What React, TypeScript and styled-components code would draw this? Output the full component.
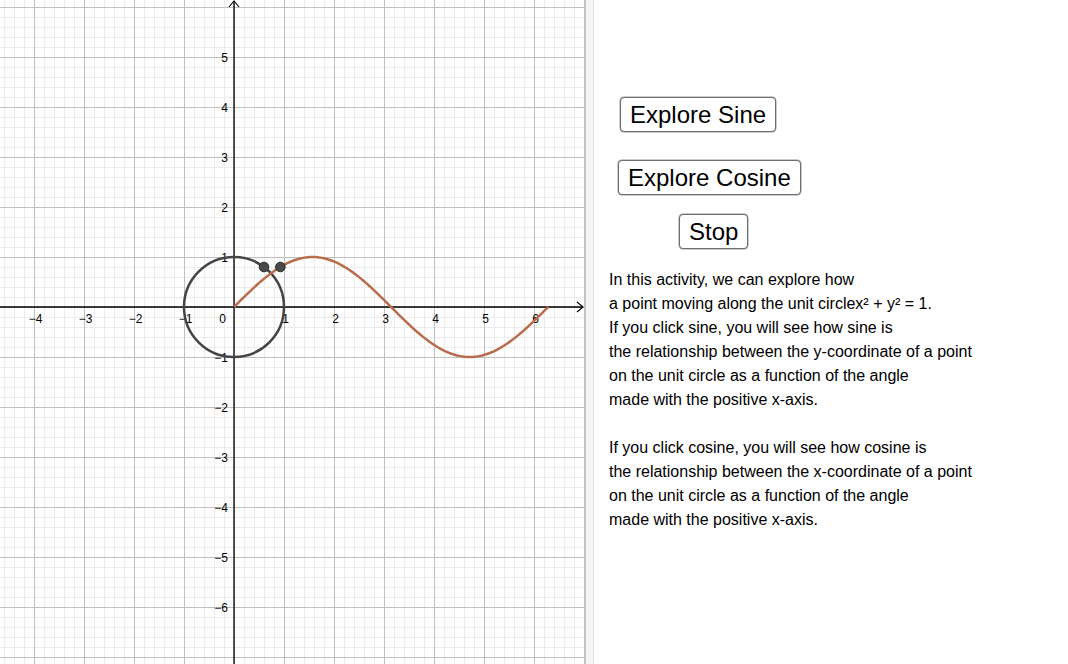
import React from "react";
import styled, { createGlobalStyle } from "styled-components";

const GlobalStyle = createGlobalStyle`
  html, body {
    margin: 0;
    padding: 0;
    background: #ffffff;
    font-family: "Liberation Sans", Arial, sans-serif;
  }
`;

const Page = styled.div`
  display: flex;
  flex-direction: row;
  width: 1068px;
  height: 664px;
  overflow: hidden;
  background: #ffffff;
`;

const GraphicsView = styled.div`
  flex: 0 0 585px;
  height: 664px;
  overflow: hidden;
  background: #ffffff;
`;

const Divider = styled.div`
  flex: 0 0 7px;
  height: 664px;
  background: #f4f4f4;
  border-left: 1px solid #c8c8c8;
  border-right: 1px solid #e2e2e2;
`;

const SidePanel = styled.div`
  flex: 1;
  display: flex;
  flex-direction: column;
  align-items: flex-start;
  padding-top: 97px;
`;

const ActionButton = styled.button<{ $left: number; $gap: number }>`
  margin-left: ${(p) => p.$left}px;
  margin-top: ${(p) => p.$gap}px;
  height: 35px;
  padding: 0 9px;
  font-family: "Liberation Sans", Arial, sans-serif;
  font-size: 24px;
  color: #000000;
  background: #ffffff;
  border: 1px solid #6e6e6e;
  box-shadow: 0 0 0 0.5px #9a9a9a;
  border-radius: 4px;
  cursor: pointer;
  line-height: 33px;
`;

const Description = styled.div`
  margin-top: 19px;
  margin-left: 15px;
  font-family: "Liberation Sans", Arial, sans-serif;
  font-size: 16px;
  line-height: 24px;
  color: #000000;
`;

const Line = styled.div`
  white-space: nowrap;
  min-height: 24px;
`;

const W = 585;
const H = 664;
const OX = 234;
const OY = 307;
const U = 50;

function Graph() {
  const minorV: number[] = [];
  const majorV: number[] = [];
  for (let x = OX % 10; x <= W; x += 10) {
    if ((x - OX) % U === 0) majorV.push(x);
    else minorV.push(x);
  }
  const minorH: number[] = [];
  const majorH: number[] = [];
  for (let y = OY % 10; y <= H; y += 10) {
    if ((y - OY) % U === 0) majorH.push(y);
    else minorH.push(y);
  }

  let d = "";
  const steps = 200;
  for (let i = 0; i <= steps; i++) {
    const t = (i / steps) * 2 * Math.PI;
    const px = OX + t * U;
    const py = OY - Math.sin(t) * U;
    d += `${i === 0 ? "M" : "L"}${px.toFixed(2)},${py.toFixed(2)}`;
  }

  const xLabels = [-4, -3, -2, -1, 1, 2, 3, 4, 5, 6];
  const yLabels = [5, 4, 3, 2, 1, -1, -2, -3, -4, -5, -6];
  const fmt = (n: number) => (n < 0 ? `\u2212${-n}` : `${n}`);
  const angle = Math.atan2(0.8, 0.6);

  return (
    <svg width={W} height={H} viewBox={`0 0 ${W} ${H}`}>
      {minorV.map((x) => (
        <line key={`mv${x}`} x1={x + 0.5} y1={0} x2={x + 0.5} y2={H} stroke="#ebebeb" strokeWidth={1} />
      ))}
      {minorH.map((y) => (
        <line key={`mh${y}`} x1={0} y1={y + 0.5} x2={W} y2={y + 0.5} stroke="#ebebeb" strokeWidth={1} />
      ))}
      {majorV.map((x) => (
        <line key={`Mv${x}`} x1={x + 0.5} y1={0} x2={x + 0.5} y2={H} stroke="#c0c0c0" strokeWidth={1} />
      ))}
      {majorH.map((y) => (
        <line key={`Mh${y}`} x1={0} y1={y + 0.5} x2={W} y2={y + 0.5} stroke="#c0c0c0" strokeWidth={1} />
      ))}

      {/* axes */}
      <line x1={0} y1={OY} x2={583} y2={OY} stroke="#000" strokeWidth={1.3} />
      <polyline points={`577,${OY - 5} 583,${OY} 577,${OY + 5}`} fill="none" stroke="#000" strokeWidth={1.1} />
      <line x1={OX} y1={1} x2={OX} y2={H} stroke="#000" strokeWidth={1.3} />
      <polyline points={`${OX - 5},${7} ${OX},${1} ${OX + 5},${7}`} fill="none" stroke="#000" strokeWidth={1.1} />

      {/* labels */}
      <g fontFamily='"Liberation Sans", Arial, sans-serif' fontSize={12} fill="#000">
        {xLabels.map((n) => (
          <text key={`xl${n}`} x={OX + n * U + 1.5} y={OY + 16} textAnchor="middle">
            {fmt(n)}
          </text>
        ))}
        <text x={OX - 8} y={OY + 16} textAnchor="end">0</text>
        {yLabels.map((n) => (
          <text key={`yl${n}`} x={OX - 6} y={OY - n * U + 4.5} textAnchor="end">
            {fmt(n)}
          </text>
        ))}
      </g>

      {/* unit circle */}
      <circle cx={OX} cy={OY} r={U} fill="none" stroke="#444444" strokeWidth={2.5} />
      {/* sine */}
      <path d={d} fill="none" stroke="#b86c4b" strokeWidth={2.5} strokeLinejoin="round" />

      {/* points */}
      <circle cx={OX + 0.6 * U} cy={OY - 0.8 * U} r={4.8} fill="#4a4a4a" stroke="#2a2a2a" strokeWidth={1} />
      <circle cx={OX + angle * U} cy={OY - 0.8 * U} r={4.8} fill="#4a4a4a" stroke="#2a2a2a" strokeWidth={1} />
    </svg>
  );
}

export default function App() {
  return (
    <>
      <GlobalStyle />
      <Page>
        <GraphicsView>
          <Graph />
        </GraphicsView>
        <Divider />
        <SidePanel>
          <ActionButton $left={26} $gap={0}>Explore Sine</ActionButton>
          <ActionButton $left={24} $gap={28}>Explore Cosine</ActionButton>
          <ActionButton $left={85} $gap={19}>Stop</ActionButton>
          <Description>
            <Line>In this activity, we can explore how</Line>
            <Line>a point moving along the unit circlex² + y² = 1.</Line>
            <Line>If you click sine, you will see how sine is</Line>
            <Line>the relationship between the y-coordinate of a point</Line>
            <Line>on the unit circle as a function of the angle</Line>
            <Line>made with the positive x-axis.</Line>
            <Line />
            <Line>If you click cosine, you will see how cosine is</Line>
            <Line>the relationship between the x-coordinate of a point</Line>
            <Line>on the unit circle as a function of the angle</Line>
            <Line>made with the positive x-axis.</Line>
          </Description>
        </SidePanel>
      </Page>
    </>
  );
}
